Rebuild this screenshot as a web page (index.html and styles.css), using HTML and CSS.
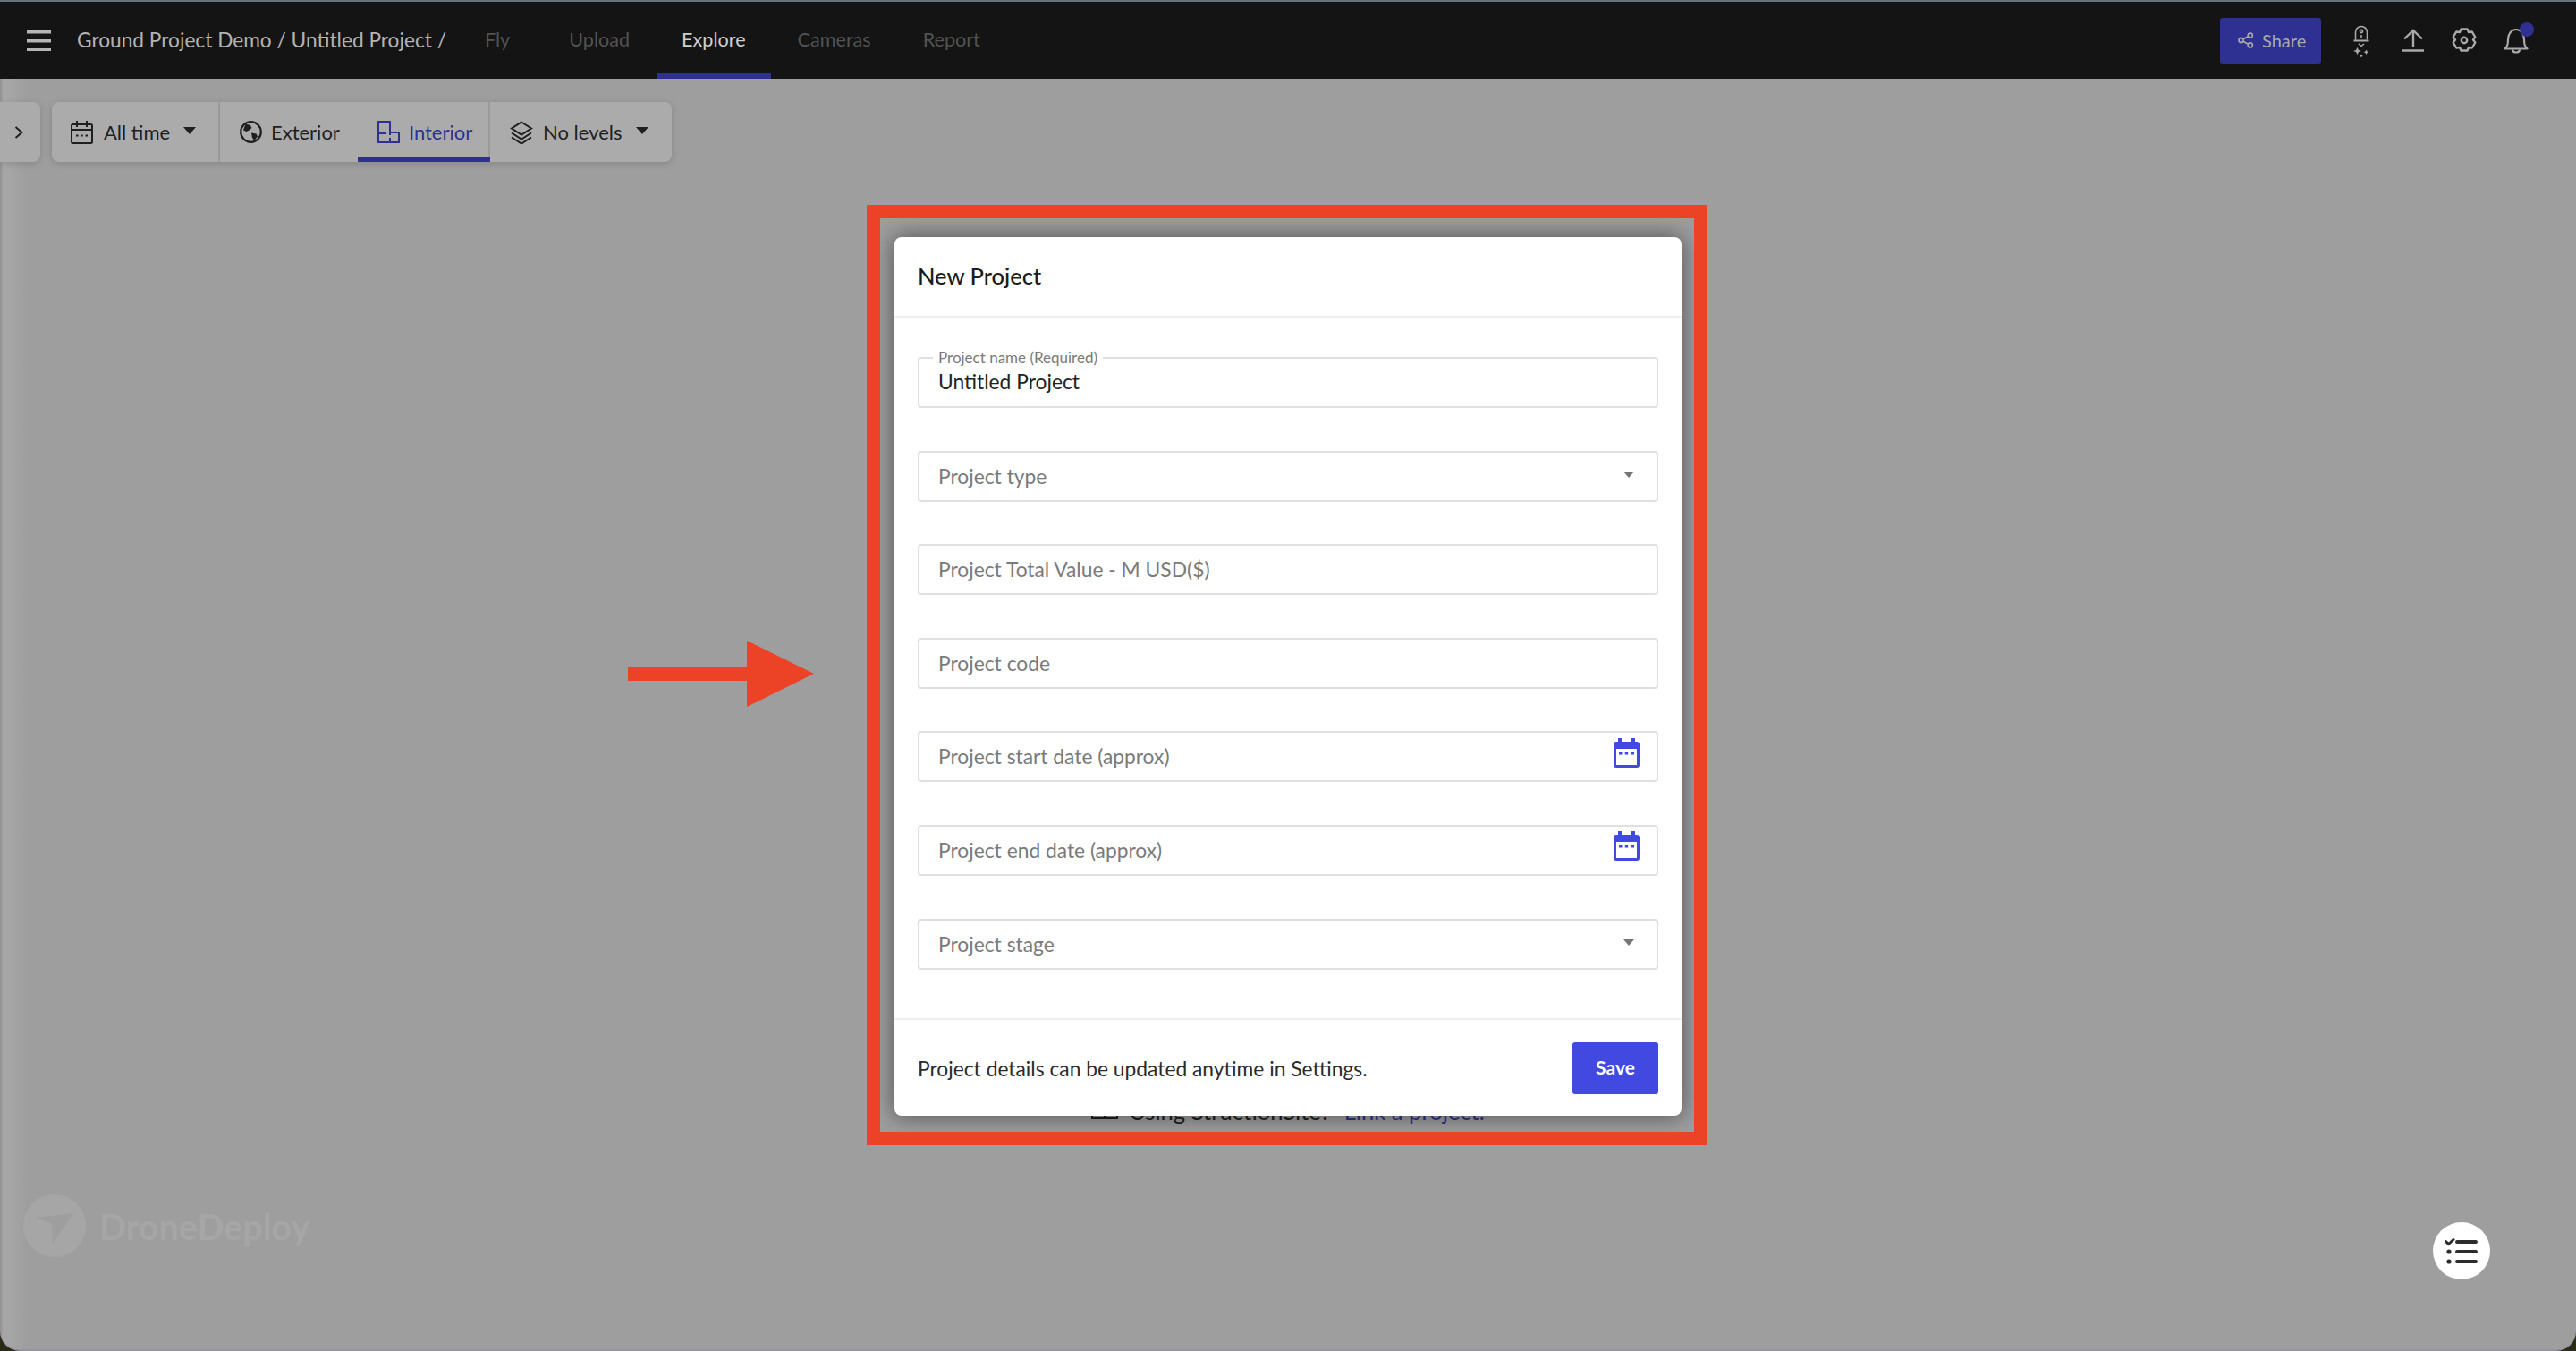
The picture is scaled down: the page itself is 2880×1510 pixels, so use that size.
FILE: index.html
```html
<!DOCTYPE html>
<html lang="en">
<head>
    <meta charset="UTF-8">
    <title>New Project - DroneDeploy</title>
    <link rel="stylesheet" href="styles.css">
</head>
<body>
    <div class="app">
        <header class="topbar">
            <svg class="menu-icon" width="28" height="24" viewBox="0 0 28 24"><rect x="1" y="1" width="27" height="3.5"/><rect x="1" y="11" width="27" height="3.5"/><rect x="1" y="21" width="27" height="3.5"/></svg>
            <div class="crumbs">Ground Project Demo / Untitled Project /</div>
            <nav class="tabs">
                <a class="tab fly">Fly</a>
                <a class="tab">Upload</a>
                <a class="tab active">Explore</a>
                <a class="tab">Cameras</a>
                <a class="tab">Report</a>
            </nav>
            <div class="top-actions">
                <button class="share-button">
                    <svg width="18" height="18" viewBox="0 0 18 18" fill="none" stroke="currentColor" stroke-width="1.6"><circle cx="3.6" cy="9" r="2.6"/><circle cx="13.8" cy="3.6" r="2.6"/><circle cx="13.8" cy="14.4" r="2.6"/><path d="M6 7.8l5.4-3M6 10.2l5.4 3"/></svg>
                    Share
                </button>
                <svg class="top-icon rocket" width="20" height="37" viewBox="0 0 20 37" fill="none" stroke="currentColor" stroke-width="1.6"><path d="M3.5 17.5V9a6.5 6.5 0 0 1 13 0v8.500"/><path d="M1.500 18.500h17" stroke-width="2"/><circle cx="10" cy="8" r="1.600"/><path d="M10 12v4"/><path d="M7 22l3 2.500 3-2.500"/><path d="M5.500 26l1.500 3 3 1-3 1-1.500 3-1.500-3-3-1 3-1zM15.500 28.500l1 2 2 .8-2 .8-1 2-1-2-2-.8 2-.8z" fill="currentColor" stroke="none"/><circle cx="10" cy="35.500" r="1.300" fill="currentColor" stroke="none"/></svg>
                <svg class="top-icon upload" width="26" height="26" viewBox="0 0 26 26" fill="none" stroke="currentColor" stroke-width="2.400"><path d="M13 20V2M3 11.500L13 2l10 9.500M1 24.500h24"/></svg>
                <svg class="top-icon gear" width="30" height="30" viewBox="0 0 30 30" fill="none" stroke="currentColor" stroke-width="2.400"><path d="M11.500 2.500h7l1.500 3.500 3.800-.5 3.500 6-2.300 3 2.300 3-3.500 6-3.800-.5-1.500 3.500h-7l-1.500-3.500-3.800.5-3.500-6 2.300-3-2.300-3 3.500-6 3.800.5z" stroke-linejoin="round"/><circle cx="15" cy="15" r="3.200"/></svg>
                <div class="bell">
                    <svg class="top-icon" width="28" height="30" viewBox="0 0 28 30" fill="none" stroke="currentColor" stroke-width="2.200"><path d="M1.500 24.500c3-2 3.500-5 3.500-10C5 8 8.500 3 14 3s9 5 9 11.500c0 5 .5 8 3.500 10z" stroke-linejoin="round"/><path d="M10 25.500c.5 4 7.500 4 8 0"/></svg>
                    <span class="bell-dot"></span>
                </div>
            </div>
        </header>

        <div class="toolbar">
            <div class="panel-toggle">
                <svg width="10" height="14" viewBox="0 0 10 14" fill="none" stroke="currentColor" stroke-width="2"><path d="M1.500 1l7 6-7 6"/></svg>
            </div>
            <div class="filter-bar">
                <div class="filter-group time">
                    <svg width="25" height="26" viewBox="0 0 25 26" fill="none" stroke="currentColor" stroke-width="2"><rect x="1" y="4" width="23" height="21" rx="1.500"/><path d="M1 10h23M7 0v7M18 0v7"/><path d="M6 16.500h2.500M11.200 16.500h2.500M16.500 16.500H19" stroke-width="1.800"/></svg>
                    <span>All time</span>
                    <span class="caret"></span>
                </div>
                <div class="filter-group places">
                    <div class="place">
                        <svg width="25" height="25" viewBox="0 0 25 25"><circle cx="12.500" cy="12.500" r="11.300" fill="none" stroke="currentColor" stroke-width="2.200"/><path d="M6.500 3.500l5.500 1.500 1.500 3-3 2.500-3 1.500-3.500-1.500zM13 13.500l5.500 1 1.500 3-3.500 4.500-2.500-3z" fill="currentColor"/></svg>
                        <span>Exterior</span>
                    </div>
                    <div class="place active">
                        <svg width="25" height="25" viewBox="0 0 25 25" fill="none" stroke="currentColor" stroke-width="2"><path d="M1 1h13v12h10v11H1zM1 14h8M14 13v3M14 19v5"/></svg>
                        <span>Interior</span>
                    </div>
                </div>
                <div class="filter-group levels">
                    <svg width="26" height="26" viewBox="0 0 26 26" fill="none" stroke="currentColor" stroke-width="2"><path d="M13 1.500l11 7-11 7-11-7zM2 13.500l11 7 11-7M2 18.500l11 7 11-7"/></svg>
                    <span>No levels</span>
                    <span class="caret"></span>
                </div>
            </div>
        </div>

        <div class="link-row">
            <svg class="link-icon" width="30" height="26" viewBox="0 0 30 26" fill="none" stroke="currentColor" stroke-width="2"><rect x="1" y="1" width="28" height="24"/><path d="M15 1v24"/></svg>
            <span>Using StructionSite?</span>
            <a>Link a project.</a>
        </div>

        <div class="watermark">
            <svg width="70" height="70" viewBox="0 0 70 70"><circle cx="35" cy="35" r="35" class="wm-disc"/><path d="M14 26l42-5-23 34-1-22z" class="wm-arrow"/></svg>
            <span>DroneDeploy</span>
        </div>

        <button class="checklist-button">
            <svg width="38" height="30" viewBox="0 0 38 30" fill="none" stroke="#2c2c2c" stroke-width="4" stroke-linecap="round"><path d="M14 5h21M14 16h21M14 27h21"/><path d="M1.500 4.500L4.500 7.500 10 2.500" stroke-width="3"/><circle cx="5" cy="16" r="2.600" fill="#2c2c2c" stroke="none"/><circle cx="5" cy="27" r="2.600" fill="#2c2c2c" stroke="none"/></svg>
        </button>

        <svg class="callout-arrow" width="208" height="74" viewBox="0 0 208 74"><path d="M0 30h133V0l75 37-75 37V45H0z"/></svg>

        <div class="callout-frame">
            <div class="modal">
                <div class="modal-header">New Project</div>
                <form class="modal-body">
                    <div class="field filled">
                        <label class="field-label">Project name (Required)</label>
                        <span>Untitled Project</span>
                    </div>
                    <div class="field">
                        <span>Project type</span>
                        <span class="select-caret"></span>
                    </div>
                    <div class="field">
                        <span>Project Total Value - M USD($)</span>
                    </div>
                    <div class="field">
                        <span>Project code</span>
                    </div>
                    <div class="field">
                        <span>Project start date (approx)</span>
                        <svg class="date-icon" width="29" height="33" viewBox="0 0 29 33"><path d="M5 0h4v4h11V0h4v4h2a3 3 0 0 1 3 3v23a3 3 0 0 1-3 3H3a3 3 0 0 1-3-3V7a3 3 0 0 1 3-3h2zM3 12v18h23V12zM6 15h3.500v3.500H6zM12.700 15h3.500v3.500h-3.500zM19.500 15H23v3.500h-3.500z" fill-rule="evenodd"/></svg>
                    </div>
                    <div class="field">
                        <span>Project end date (approx)</span>
                        <svg class="date-icon" width="29" height="33" viewBox="0 0 29 33"><path d="M5 0h4v4h11V0h4v4h2a3 3 0 0 1 3 3v23a3 3 0 0 1-3 3H3a3 3 0 0 1-3-3V7a3 3 0 0 1 3-3h2zM3 12v18h23V12zM6 15h3.500v3.500H6zM12.700 15h3.500v3.500h-3.500zM19.500 15H23v3.500h-3.500z" fill-rule="evenodd"/></svg>
                    </div>
                    <div class="field">
                        <span>Project stage</span>
                        <span class="select-caret"></span>
                    </div>
                </form>
                <div class="modal-footer">
                    <span>Project details can be updated anytime in Settings.</span>
                    <button class="save-button" type="button">Save</button>
                </div>
            </div>
        </div>
    </div>
</body>
</html>
```

FILE: styles.css
```css
* {
    box-sizing: border-box;
}
html, body {
    margin: 0;
    padding: 0;
    background: #2b2a14;
}
body {
    font-family: Lato, "Liberation Sans", sans-serif;
    color: #1f1f1f;
}
.app {
    position: relative;
    width: 2880px;
    height: 1510px;
    overflow: hidden;
    background: linear-gradient(90deg, #8f8f8f 0, #a8a8a8 4px, #9e9e9e 30px);
    border-radius: 0 0 22px 22px;
    border-bottom: 2px solid #95939f;
}
.topbar {
    display: flex;
    align-items: center;
    height: 88px;
    padding-left: 29px;
    background: #141414;
    border-top: 2px solid #66717a;
    color: #b3b3b3;
    font-size: 22.7px;
}
.menu-icon {
    flex: none;
    margin-right: 29px;
    fill: #b5b5b5;
}
.crumbs {
    width: 428px;
    margin-top: -2px;
    white-space: nowrap;
}
.tabs {
    display: flex;
    align-self: stretch;
    gap: 2px;
    font-size: 21.6px;
}
.tab {
    display: flex;
    align-items: center;
    padding: 5px 28px 1px;
    color: #525252;
    border-bottom: 6px solid transparent;
}
.tab.fly {
    margin-right: 8px;
}
.tab.active {
    color: #cfcfcf;
    border-bottom-color: #2e3192;
}
.top-actions {
    display: flex;
    align-items: center;
    margin-left: auto;
    padding-right: 53px;
}
.share-button {
    display: flex;
    align-items: center;
    gap: 9px;
    width: 113px;
    height: 51px;
    padding: 0 0 0 20px;
    background: #2e3192;
    border: none;
    border-radius: 3px;
    color: #a9a9a9;
    font-family: inherit;
    font-size: 20px;
    margin-right: 35px;
}
.top-icon {
    color: #a9a9a9;
    display: block;
}
.rocket {
    margin-right: 35px;
}
.upload {
    margin-right: 29px;
}
.gear {
    margin-right: 29px;
}
.bell {
    position: relative;
}
.bell-dot {
    position: absolute;
    top: -5px;
    right: -6px;
    width: 16px;
    height: 16px;
    border-radius: 50%;
    background: #2e3192;
}
.toolbar {
    display: flex;
    gap: 13px;
    margin-top: 26px;
    height: 67px;
    font-size: 22px;
}
.panel-toggle {
    display: flex;
    align-items: center;
    justify-content: center;
    width: 45px;
    padding-right: 3px;
    background: #ababab;
    border-radius: 0 8px 8px 0;
    box-shadow: 0 2px 8px rgba(0, 0, 0, 0.15);
}
.filter-bar {
    display: flex;
    width: 693px;
    background: #ababab;
    border-radius: 8px;
    box-shadow: 0 2px 8px rgba(0, 0, 0, 0.15);
}
.filter-group {
    display: flex;
    align-items: center;
    border-right: 2px solid #9a9a9a;
}
.filter-group:last-child {
    border-right: none;
}
.time {
    width: 188px;
    padding-left: 21px;
    gap: 12px;
}
.time .caret {
    margin-left: 3px;
}
.places {
    width: 302px;
}
.place {
    display: flex;
    align-items: center;
    gap: 10px;
    height: 100%;
    padding: 0 20px 0 22px;
}
.place.active {
    color: #2e3192;
    border-bottom: 6px solid #2e3192;
    padding-top: 6px;
    flex: 1;
}
.levels {
    flex: 1;
    padding-left: 22px;
    gap: 11px;
}
.levels .caret {
    margin-left: 4px;
}
.caret {
    width: 0;
    height: 0;
    margin-top: -4px;
    border-left: 7.5px solid transparent;
    border-right: 7.5px solid transparent;
    border-top: 8px solid #1f1f1f;
}
.link-row {
    display: flex;
    align-items: center;
    justify-content: center;
    gap: 12px;
    margin-top: 1044px;
    font-size: 25.6px;
    color: #1f1f1f;
}
.link-icon {
    margin-bottom: 8px;
}
.link-row a {
    color: #2e3192;
    margin-left: 3px;
}
.watermark {
    position: absolute;
    left: 26px;
    top: 1335px;
    display: flex;
    align-items: center;
    gap: 15px;
    font-size: 39.5px;
    font-weight: 700;
    color: #a6a6a6;
}
.wm-disc {
    fill: #a6a6a6;
}
.wm-arrow {
    fill: #9e9e9e;
}
.checklist-button {
    position: absolute;
    left: 2720px;
    top: 1366px;
    display: flex;
    align-items: center;
    justify-content: center;
    width: 64px;
    height: 64px;
    padding: 0;
    background: #fff;
    border: none;
    border-radius: 50%;
}
.callout-arrow {
    position: absolute;
    left: 702px;
    top: 716px;
    fill: #ec4226;
}
.callout-frame {
    position: absolute;
    left: 969px;
    top: 229px;
    width: 940px;
    height: 1051px;
    padding: 21px 14px 18px 16px;
    border: 15px solid #ec4226;
    overflow: hidden;
}
.modal {
    display: flex;
    flex-direction: column;
    height: 100%;
    background: #fff;
    border-radius: 8px;
    box-shadow: 0 0 24px 2px rgba(0, 0, 0, 0.45);
}
.modal-header {
    display: flex;
    align-items: center;
    height: 90px;
    padding-left: 26px;
    padding-bottom: 2px;
    border-bottom: 2px solid #eeeeee;
    font-size: 25.5px;
    font-weight: 500;
    color: #1c1c1c;
}
.modal-body {
    flex: 1;
    display: flex;
    flex-direction: column;
    gap: 47.6px;
    padding: 44px 26px 0;
}
.field {
    position: relative;
    display: flex;
    align-items: center;
    justify-content: space-between;
    height: 57px;
    padding: 0 21px 1px;
    border: 2px solid #e0e0e0;
    border-radius: 4px;
    color: #7a7a7a;
    font-size: 22.8px;
}
.field.filled {
    padding-bottom: 3px;
    color: #222;
}
.field-label {
    position: absolute;
    left: 15px;
    top: -12px;
    padding: 0 6px;
    background: #fff;
    color: #7a7a7a;
    font-size: 17px;
}
.select-caret {
    width: 0;
    height: 0;
    margin-right: 4px;
    margin-top: -3px;
    border-left: 6.5px solid transparent;
    border-right: 6.5px solid transparent;
    border-top: 7px solid #757575;
}
.date-icon {
    margin-right: -2px;
    margin-top: -8px;
    fill: #4149e0;
}
.modal-footer {
    display: flex;
    align-items: center;
    justify-content: space-between;
    height: 109px;
    padding: 0 26px;
    border-top: 2px solid #eeeeee;
    font-size: 22.8px;
    color: #2a2a2a;
}
.save-button {
    width: 96px;
    height: 58px;
    padding: 0 0 2px;
    background: #4149e0;
    border: none;
    border-radius: 3px;
    color: #fff;
    font-family: inherit;
    font-size: 21px;
    font-weight: 700;
}
```
